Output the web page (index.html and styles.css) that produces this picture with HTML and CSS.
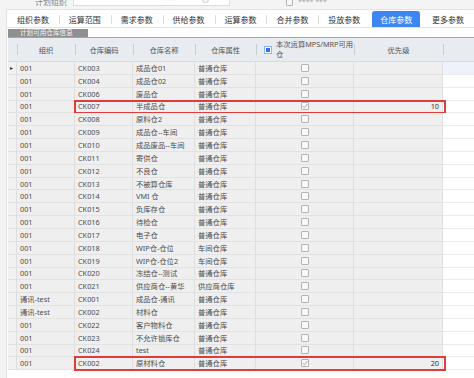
FILE: index.html
```html
<!DOCTYPE html>
<html lang="zh-CN">
<head>
  <meta charset="UTF-8" />
  <meta name="viewport" content="width=device-width, initial-scale=1.0"/>
  <title>仓库参数</title>
  <link rel="stylesheet" href="styles.css">
</head>
<body>
  <div class="topbar">
    <div class="field">
      <span class="field-label">计划组织</span>
      <span class="field-input"><span class="field-value">***</span><span class="info"></span></span>
    </div>
    <div class="top-check"><span class="box"></span><span class="top-check-text">**** ***</span></div>
  </div>

  <div class="panel">
    <nav class="tabs">
      <a href="#" class="tab">组织参数</a>
      <a href="#" class="tab">运算范围</a>
      <a href="#" class="tab">需求参数</a>
      <a href="#" class="tab">供给参数</a>
      <a href="#" class="tab">运算参数</a>
      <a href="#" class="tab">合并参数</a>
      <a href="#" class="tab">投放参数</a>
      <a href="#" class="tab active">仓库参数</a>
      <a href="#" class="tab">更多参数</a>
    </nav>

    <div class="section-tag">计划可用仓库信息</div>

    <div class="grid">
      <div class="grid-head">
        <div class="hcell first"></div>
        <div class="hcell">组织</div>
        <div class="hcell">仓库编码</div>
        <div class="hcell">仓库名称</div>
        <div class="hcell">仓库属性</div>
        <div class="hcell check-head">
          <span class="head-box"></span>
          <span class="check-label">本次运算MPS/MRP可用<br>仓</span>
        </div>
        <div class="hcell">优先级</div>
        <div class="hcell"></div>
      </div>
      <div id="rows"></div>
    </div>
  </div>

  <script>
    const rows = [
      ["001", "CK003", "成品仓01", "普通仓库"],
      ["001", "CK004", "成品仓02", "普通仓库"],
      ["001", "CK006", "废品仓", "普通仓库"],
      ["001", "CK007", "半成品仓", "普通仓库", true, "10"],
      ["001", "CK008", "原料仓2", "普通仓库"],
      ["001", "CK009", "成品仓--车间", "普通仓库"],
      ["001", "CK010", "成品废品--车间", "普通仓库"],
      ["001", "CK011", "寄供仓", "普通仓库"],
      ["001", "CK012", "不良仓", "普通仓库"],
      ["001", "CK013", "不被算仓库", "普通仓库"],
      ["001", "CK014", "VMI 仓", "普通仓库"],
      ["001", "CK015", "负库存仓", "普通仓库"],
      ["001", "CK016", "待检仓", "普通仓库"],
      ["001", "CK017", "电子仓", "普通仓库"],
      ["001", "CK018", "WIP仓-仓位", "车间仓库"],
      ["001", "CK019", "WIP仓-仓位2", "车间仓库"],
      ["001", "CK020", "冻结仓--测试", "普通仓库"],
      ["001", "CK021", "供应商仓--黄华", "供应商仓库"],
      ["通讯-test", "CK001", "成品仓-通讯", "普通仓库"],
      ["通讯-test", "CK002", "材料仓", "普通仓库"],
      ["001", "CK022", "客户物料仓", "普通仓库"],
      ["001", "CK023", "不允许锁库仓", "普通仓库"],
      ["001", "CK024", "test", "普通仓库"],
      ["001", "CK002", "原材料仓", "普通仓库", true, "20"]
    ];

    const tick = '<svg viewBox="0 0 8 8" width="6" height="6"><polyline points="1,4.2 3.2,6.3 7,1.5" fill="none" stroke="#8a8a8a" stroke-width="1"/></svg>';
    const list = document.getElementById("rows");

    rows.forEach((r, i) => {
      const [org, code, name, kind, checked, prio] = r;
      const div = document.createElement("div");
      div.className = "row" + (i === 0 ? " current" : "");
      div.innerHTML = `
        <div class="cell lead">${i === 0 ? "▸" : ""}</div>
        <div class="cell">${org}</div>
        <div class="cell">${code}</div>
        <div class="cell">${name}</div>
        <div class="cell">${kind}</div>
        <div class="cell center"><span class="box${checked ? " on" : ""}">${checked ? tick : ""}</span></div>
        <div class="cell num">${prio || ""}</div>
        <div class="cell filler"></div>
        ${checked ? '<span class="mark"></span>' : ""}
      `;
      list.appendChild(div);
    });
  </script>
</body>
</html>
```

FILE: styles.css
```css
:root {
  --cols: 9px 58px 58px 62px 61px 98px 89px 1fr;
  --text: #4d4d4d;
  --cell-bg: #efefef;
  --line: #dfdfdf;
  --blue: #3d86f2;
  --red: #e23b3b;
}

* {
  margin: 0;
  padding: 0;
  box-sizing: border-box;
}

body {
  background: #f4f4f4;
  font-family: "Noto Sans", "Noto Sans CJK SC", sans-serif;
  color: var(--text);
  font-size: 7.3px;
  width: 474px;
  height: 378px;
  overflow: hidden;
}

/* cut-off filter bar on top */
.topbar {
  height: 9px;
  overflow: hidden;
  display: flex;
  align-items: flex-end;
}

.field {
  display: flex;
  align-items: flex-end;
  margin-left: 35px;
}

.field-label {
  width: 38px;
  font-size: 8px;
  line-height: 10px;
  color: #888;
  margin-bottom: 2px;
}

.field-input {
  width: 157px;
  height: 14px;
  margin-bottom: 3px;
  background: #fff;
  border: 1px solid #dcdcdc;
  display: flex;
  align-items: center;
  justify-content: flex-end;
  gap: 26px;
  padding-right: 20px;
  color: #999;
  font-size: 7px;
}

.info {
  width: 7px;
  height: 7px;
  border: 1px solid #c8c8c8;
  border-radius: 50%;
}

.top-check {
  display: flex;
  align-items: center;
  gap: 5px;
  margin-left: 56px;
  margin-bottom: 3px;
  color: #aaa;
  font-size: 7px;
}

.top-check .box {
  width: 7px;
  height: 8px;
}

/* panel */
.panel {
  margin-left: 6px;
  height: 369px;
  background: #fff;
  border-left: 1px solid #e3e3e3;
  border-top: 1px solid #e3e3e3;
}

.tabs {
  display: flex;
  height: 17px;
  margin-top: 1px;
  border-bottom: 1px solid #e4e4e4;
}

.tab {
  position: relative;
  width: 52px;
  display: flex;
  align-items: center;
  justify-content: center;
  text-decoration: none;
  color: #333;
  font-size: 8px;
}

.tab + .tab::before {
  content: "";
  position: absolute;
  left: 0;
  top: 4px;
  height: 9px;
  border-left: 1px solid #dcdcdc;
}

.tab.active {
  width: 48px;
  margin: 0 2px;
  background: var(--blue);
  color: #fff;
  border-radius: 3px 3px 0 0;
}

.tab.active::before,
.tab.active + .tab::before {
  display: none;
}

.section-tag {
  width: 80px;
  height: 8px;
  margin: 1px 0 0 1px;
  padding-left: 12px;
  background: #8f8f8f;
  color: #f4f4f4;
  font-size: 6.6px;
  line-height: 8px;
  white-space: nowrap;
}

/* grid */
.grid {
  margin-left: 1px;
}

.grid-head {
  display: grid;
  grid-template-columns: var(--cols);
  height: 25px;
  background: #e8ebf0;
  border-top: 1px solid #a5a5a5;
  border-bottom: 1px solid #d8dbe0;
}

.hcell {
  position: relative;
  display: flex;
  align-items: center;
  justify-content: center;
  color: #555;
}

.hcell + .hcell::before {
  content: "";
  position: absolute;
  left: 0;
  top: 6px;
  height: 11px;
  border-left: 1px solid #c9ccd1;
}

.check-head {
  justify-content: flex-start;
  padding-left: 8px;
  gap: 4px;
}

.head-box {
  width: 8px;
  height: 8px;
  flex: none;
  background: #2f6fe4;
  border: 1px solid #8db2f2;
  box-shadow: inset 0 0 0 1px #fff;
}

.check-label {
  line-height: 10px;
  white-space: nowrap;
  margin-top: -1px;
}

.row {
  position: relative;
  display: grid;
  grid-template-columns: var(--cols);
  height: 12.85px;
}

.cell {
  display: flex;
  align-items: center;
  padding-left: 3px;
  background: var(--cell-bg);
  border-right: 1px solid var(--line);
  border-bottom: 1px solid #e2e2e2;
  white-space: nowrap;
  overflow: hidden;
}

.cell.lead {
  padding-left: 2px;
  font-size: 6px;
  color: #333;
  background: #f1f1f1;
}

.cell.center {
  justify-content: center;
  padding-left: 0;
}

.cell.num {
  justify-content: flex-end;
  padding: 0 3px 0 0;
  color: #333;
}

.cell.filler {
  background: #fff;
  border-right: none;
  border-bottom-color: #ececec;
}

.row.current .filler {
  background: #edf2fc;
}

.box {
  width: 8px;
  height: 8px;
  border: 1px solid #b4b4b4;
  border-radius: 1px;
  background: #f8f8f8;
  display: flex;
  align-items: center;
  justify-content: center;
}

.mark {
  position: absolute;
  left: 66px;
  width: 372px;
  top: -1px;
  bottom: -1px;
  border: 2px solid var(--red);
}
```
